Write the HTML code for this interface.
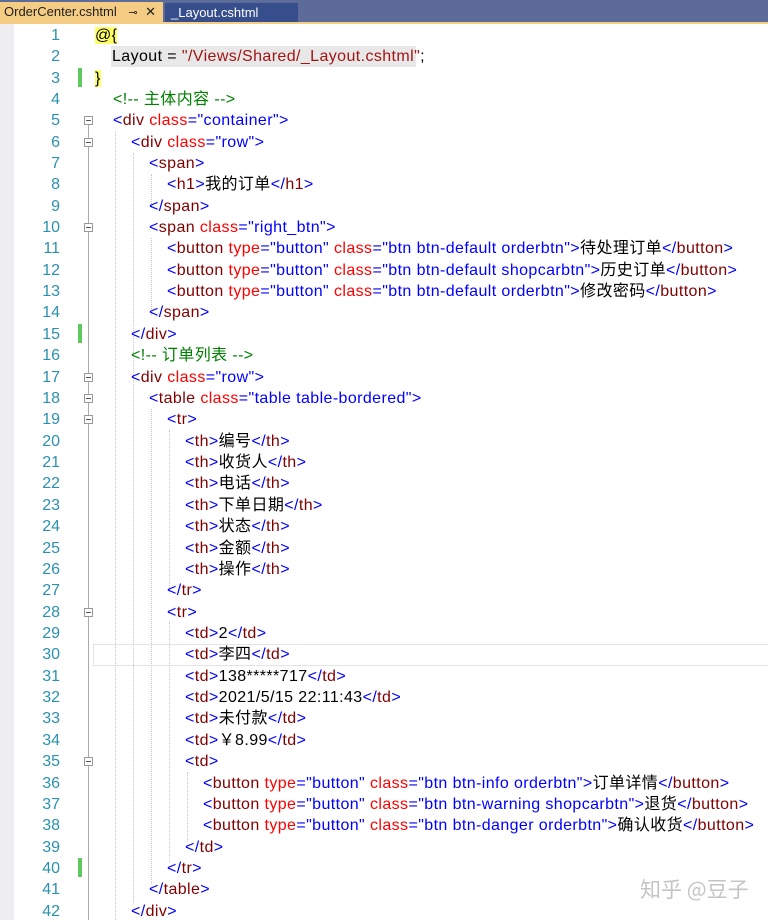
<!DOCTYPE html>
<html><head><meta charset="utf-8"><style>
body{margin:0;width:768px;height:920px;overflow:hidden;background:#fff;position:relative;font-family:"Liberation Sans","Noto Sans CJK SC",sans-serif;font-size:16px}
.tabbar{position:absolute;left:0;top:0;width:768px;height:22px;background:#5d6b99}
.tab1{position:absolute;left:0;top:2px;width:163px;height:20px;background:#f5cc84;color:#1e1e1e;font-size:13px;line-height:20px;padding-left:4px;box-sizing:border-box}
.tab2{position:absolute;left:165px;top:3px;width:133px;height:19px;background:#364e8b;color:#fff;font-size:13px;line-height:19px;padding-left:6px;box-sizing:border-box}
.under{position:absolute;left:0;top:22px;width:768px;height:2px;background:#f5cc84}
.gut{position:absolute;left:0;top:24px;width:14px;height:896px;background:#eeeef2}
.ln{position:absolute;left:14px;width:46px;text-align:right;color:#2b91af;height:21px;line-height:21px}
.l{position:absolute;height:21px;line-height:21px;white-space:pre;color:#000;letter-spacing:0.4px}
.l span{letter-spacing:0.4px}
.b{color:#0000ff}.t{color:#800000}.a{color:#ff0000}.s{color:#0000ff}.c{color:#008000}.r{color:#a31515}
.green{position:absolute;left:78px;width:4px;height:19px;background:#5ec95e}
.fold{position:absolute;left:84px;width:7px;height:7px;border:1px solid #999;background:#fff;box-sizing:content-box}
.fold:after{content:"";position:absolute;left:1px;top:3px;width:5px;height:1px;background:#555}
.vline{position:absolute;left:88px;width:1px;background:#aaa}
.guide{position:absolute;width:0;border-left:1px dotted #c8c8c8}
.cur{position:absolute;left:93px;top:644px;width:680px;height:20px;border:1px solid #e4e4e4}
.wm{position:absolute;left:640px;top:874px;font-size:21px;color:#c4c4c4;font-family:"Noto Sans CJK SC",sans-serif}
</style></head><body>
<div class="tabbar"></div>
<div class="tab1">OrderCenter.cshtml <span style="font-size:11px;margin-left:8px">⊸</span> <span style="margin-left:4px">✕</span></div>
<div class="tab2">_Layout.cshtml</div>
<div class="under"></div>
<div class="gut"></div>
<div class="cur"></div>
<div style="position:absolute;left:111px;top:46px;width:305px;height:21px;background:#e8e8e8"></div>
<div class="vline" style="top:125px;height:795px"></div>
<div class="guide" style="left:115px;top:131px;height:789px"></div>
<div class="guide" style="left:133px;top:153px;height:750px"></div>
<div class="guide" style="left:151px;top:174px;height:34px"></div>
<div class="guide" style="left:151px;top:238px;height:77px"></div>
<div class="guide" style="left:151px;top:409px;height:475px"></div>
<div class="guide" style="left:169px;top:430px;height:160px"></div>
<div class="guide" style="left:169px;top:622px;height:240px"></div>
<div class="guide" style="left:187px;top:772px;height:70px"></div>
<div class="green" style="top:68px"></div>
<div class="green" style="top:324px"></div>
<div class="green" style="top:858px"></div>
<div class="fold" style="top:116px"></div>
<div class="fold" style="top:138px"></div>
<div class="fold" style="top:223px"></div>
<div class="fold" style="top:373px"></div>
<div class="fold" style="top:394px"></div>
<div class="fold" style="top:415px"></div>
<div class="fold" style="top:608px"></div>
<div class="fold" style="top:757px"></div>

<div class="ln" style="top:25px">1</div><div class="l" style="left:95px;top:25px"><span style="background:#ffff66">@{</span></div>
<div class="ln" style="top:46px">2</div><div class="l" style="left:112px;top:46px">Layout = <span class="r">"/Views/Shared/_Layout.cshtml"</span>;</div>
<div class="ln" style="top:68px">3</div><div class="l" style="left:95px;top:68px"><span style="background:#ffff66">}</span></div>
<div class="ln" style="top:89px">4</div><div class="l c" style="left:113px;top:89px">&lt;!-- 主体内容 --&gt;</div>
<div class="ln" style="top:110px">5</div><div class="l" style="left:113px;top:110px"><span class="b">&lt;</span><span class="t">div</span> <span class="a">class</span><span class="b">="container"&gt;</span></div>
<div class="ln" style="top:132px">6</div><div class="l" style="left:131px;top:132px"><span class="b">&lt;</span><span class="t">div</span> <span class="a">class</span><span class="b">="row"&gt;</span></div>
<div class="ln" style="top:153px">7</div><div class="l" style="left:149px;top:153px"><span class="b">&lt;</span><span class="t">span</span><span class="b">&gt;</span></div>
<div class="ln" style="top:174px">8</div><div class="l" style="left:167px;top:174px"><span class="b">&lt;</span><span class="t">h1</span><span class="b">&gt;</span>我的订单<span class="b">&lt;/</span><span class="t">h1</span><span class="b">&gt;</span></div>
<div class="ln" style="top:196px">9</div><div class="l" style="left:149px;top:196px"><span class="b">&lt;/</span><span class="t">span</span><span class="b">&gt;</span></div>
<div class="ln" style="top:217px">10</div><div class="l" style="left:149px;top:217px"><span class="b">&lt;</span><span class="t">span</span> <span class="a">class</span><span class="b">="right_btn"&gt;</span></div>
<div class="ln" style="top:238px">11</div><div class="l" style="left:167px;top:238px"><span class="b">&lt;</span><span class="t">button</span> <span class="a">type</span><span class="b">="button"</span> <span class="a">class</span><span class="b">="btn btn-default orderbtn"&gt;</span>待处理订单<span class="b">&lt;/</span><span class="t">button</span><span class="b">&gt;</span></div>
<div class="ln" style="top:260px">12</div><div class="l" style="left:167px;top:260px"><span class="b">&lt;</span><span class="t">button</span> <span class="a">type</span><span class="b">="button"</span> <span class="a">class</span><span class="b">="btn btn-default shopcarbtn"&gt;</span>历史订单<span class="b">&lt;/</span><span class="t">button</span><span class="b">&gt;</span></div>
<div class="ln" style="top:281px">13</div><div class="l" style="left:167px;top:281px"><span class="b">&lt;</span><span class="t">button</span> <span class="a">type</span><span class="b">="button"</span> <span class="a">class</span><span class="b">="btn btn-default orderbtn"&gt;</span>修改密码<span class="b">&lt;/</span><span class="t">button</span><span class="b">&gt;</span></div>
<div class="ln" style="top:302px">14</div><div class="l" style="left:149px;top:302px"><span class="b">&lt;/</span><span class="t">span</span><span class="b">&gt;</span></div>
<div class="ln" style="top:324px">15</div><div class="l" style="left:131px;top:324px"><span class="b">&lt;/</span><span class="t">div</span><span class="b">&gt;</span></div>
<div class="ln" style="top:345px">16</div><div class="l c" style="left:131px;top:345px">&lt;!-- 订单列表 --&gt;</div>
<div class="ln" style="top:367px">17</div><div class="l" style="left:131px;top:367px"><span class="b">&lt;</span><span class="t">div</span> <span class="a">class</span><span class="b">="row"&gt;</span></div>
<div class="ln" style="top:388px">18</div><div class="l" style="left:149px;top:388px"><span class="b">&lt;</span><span class="t">table</span> <span class="a">class</span><span class="b">="table table-bordered"&gt;</span></div>
<div class="ln" style="top:409px">19</div><div class="l" style="left:167px;top:409px"><span class="b">&lt;</span><span class="t">tr</span><span class="b">&gt;</span></div>
<div class="ln" style="top:431px">20</div><div class="l" style="left:185px;top:431px"><span class="b">&lt;</span><span class="t">th</span><span class="b">&gt;</span>编号<span class="b">&lt;/</span><span class="t">th</span><span class="b">&gt;</span></div>
<div class="ln" style="top:452px">21</div><div class="l" style="left:185px;top:452px"><span class="b">&lt;</span><span class="t">th</span><span class="b">&gt;</span>收货人<span class="b">&lt;/</span><span class="t">th</span><span class="b">&gt;</span></div>
<div class="ln" style="top:473px">22</div><div class="l" style="left:185px;top:473px"><span class="b">&lt;</span><span class="t">th</span><span class="b">&gt;</span>电话<span class="b">&lt;/</span><span class="t">th</span><span class="b">&gt;</span></div>
<div class="ln" style="top:495px">23</div><div class="l" style="left:185px;top:495px"><span class="b">&lt;</span><span class="t">th</span><span class="b">&gt;</span>下单日期<span class="b">&lt;/</span><span class="t">th</span><span class="b">&gt;</span></div>
<div class="ln" style="top:516px">24</div><div class="l" style="left:185px;top:516px"><span class="b">&lt;</span><span class="t">th</span><span class="b">&gt;</span>状态<span class="b">&lt;/</span><span class="t">th</span><span class="b">&gt;</span></div>
<div class="ln" style="top:538px">25</div><div class="l" style="left:185px;top:538px"><span class="b">&lt;</span><span class="t">th</span><span class="b">&gt;</span>金额<span class="b">&lt;/</span><span class="t">th</span><span class="b">&gt;</span></div>
<div class="ln" style="top:559px">26</div><div class="l" style="left:185px;top:559px"><span class="b">&lt;</span><span class="t">th</span><span class="b">&gt;</span>操作<span class="b">&lt;/</span><span class="t">th</span><span class="b">&gt;</span></div>
<div class="ln" style="top:580px">27</div><div class="l" style="left:167px;top:580px"><span class="b">&lt;/</span><span class="t">tr</span><span class="b">&gt;</span></div>
<div class="ln" style="top:602px">28</div><div class="l" style="left:167px;top:602px"><span class="b">&lt;</span><span class="t">tr</span><span class="b">&gt;</span></div>
<div class="ln" style="top:623px">29</div><div class="l" style="left:185px;top:623px"><span class="b">&lt;</span><span class="t">td</span><span class="b">&gt;</span>2<span class="b">&lt;/</span><span class="t">td</span><span class="b">&gt;</span></div>
<div class="ln" style="top:644px">30</div><div class="l" style="left:185px;top:644px"><span class="b">&lt;</span><span class="t">td</span><span class="b">&gt;</span>李四<span class="b">&lt;/</span><span class="t">td</span><span class="b">&gt;</span></div>
<div class="ln" style="top:666px">31</div><div class="l" style="left:185px;top:666px"><span class="b">&lt;</span><span class="t">td</span><span class="b">&gt;</span>138*****717<span class="b">&lt;/</span><span class="t">td</span><span class="b">&gt;</span></div>
<div class="ln" style="top:687px">32</div><div class="l" style="left:185px;top:687px"><span class="b">&lt;</span><span class="t">td</span><span class="b">&gt;</span>2021/5/15 22:11:43<span class="b">&lt;/</span><span class="t">td</span><span class="b">&gt;</span></div>
<div class="ln" style="top:708px">33</div><div class="l" style="left:185px;top:708px"><span class="b">&lt;</span><span class="t">td</span><span class="b">&gt;</span>未付款<span class="b">&lt;/</span><span class="t">td</span><span class="b">&gt;</span></div>
<div class="ln" style="top:730px">34</div><div class="l" style="left:185px;top:730px"><span class="b">&lt;</span><span class="t">td</span><span class="b">&gt;</span>￥8.99<span class="b">&lt;/</span><span class="t">td</span><span class="b">&gt;</span></div>
<div class="ln" style="top:751px">35</div><div class="l" style="left:185px;top:751px"><span class="b">&lt;</span><span class="t">td</span><span class="b">&gt;</span></div>
<div class="ln" style="top:773px">36</div><div class="l" style="left:203px;top:773px"><span class="b">&lt;</span><span class="t">button</span> <span class="a">type</span><span class="b">="button"</span> <span class="a">class</span><span class="b">="btn btn-info orderbtn"&gt;</span>订单详情<span class="b">&lt;/</span><span class="t">button</span><span class="b">&gt;</span></div>
<div class="ln" style="top:794px">37</div><div class="l" style="left:203px;top:794px"><span class="b">&lt;</span><span class="t">button</span> <span class="a">type</span><span class="b">="button"</span> <span class="a">class</span><span class="b">="btn btn-warning shopcarbtn"&gt;</span>退货<span class="b">&lt;/</span><span class="t">button</span><span class="b">&gt;</span></div>
<div class="ln" style="top:815px">38</div><div class="l" style="left:203px;top:815px"><span class="b">&lt;</span><span class="t">button</span> <span class="a">type</span><span class="b">="button"</span> <span class="a">class</span><span class="b">="btn btn-danger orderbtn"&gt;</span>确认收货<span class="b">&lt;/</span><span class="t">button</span><span class="b">&gt;</span></div>
<div class="ln" style="top:837px">39</div><div class="l" style="left:185px;top:837px"><span class="b">&lt;/</span><span class="t">td</span><span class="b">&gt;</span></div>
<div class="ln" style="top:858px">40</div><div class="l" style="left:167px;top:858px"><span class="b">&lt;/</span><span class="t">tr</span><span class="b">&gt;</span></div>
<div class="ln" style="top:879px">41</div><div class="l" style="left:149px;top:879px"><span class="b">&lt;/</span><span class="t">table</span><span class="b">&gt;</span></div>
<div class="ln" style="top:901px">42</div><div class="l" style="left:131px;top:901px"><span class="b">&lt;/</span><span class="t">div</span><span class="b">&gt;</span></div>
<div class="wm">知乎 @豆子</div>
</body></html>
